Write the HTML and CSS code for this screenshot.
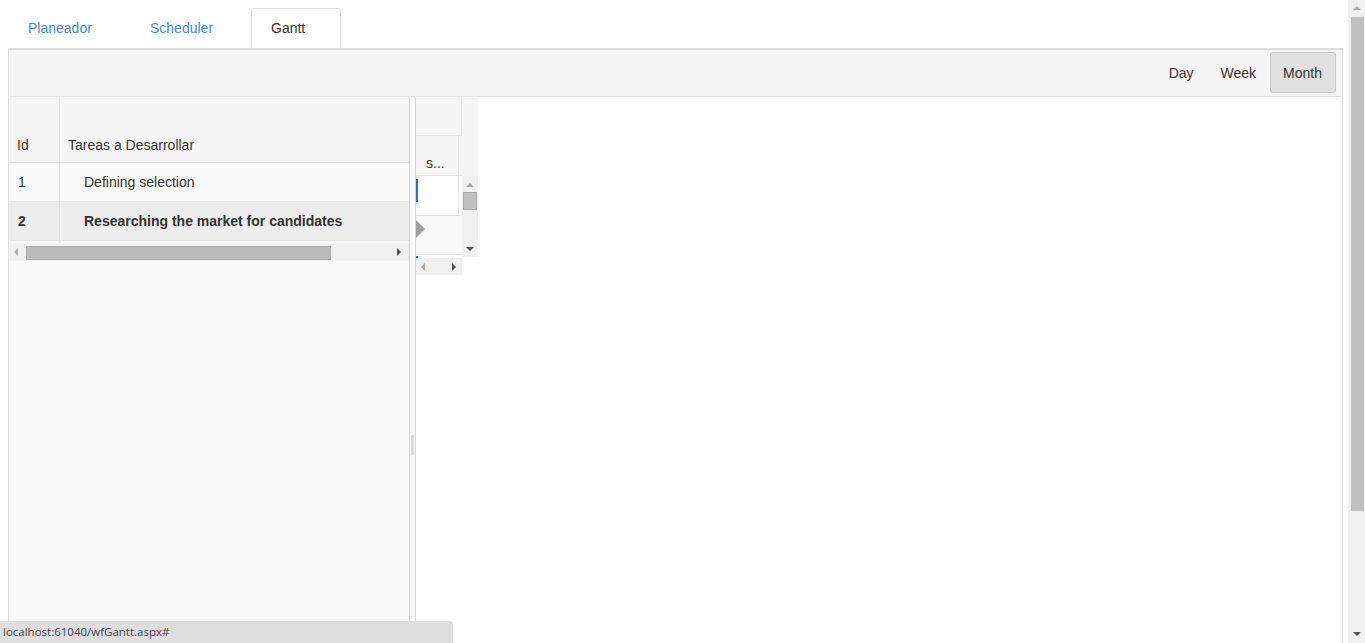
FILE: index.html
```html
<!DOCTYPE html>
<html lang="es">
<head>
<meta charset="utf-8">
<title>wfGantt</title>
<link rel="stylesheet" href="styles.css">
</head>
<body>
<ul class="tabs">
  <li class="tab tab-1"><a href="#">Planeador</a></li>
  <li class="tab tab-2"><a href="#">Scheduler</a></li>
  <li class="tab tab-3 active"><a href="#">Gantt</a></li>
</ul>
<div class="gantt">
  <div class="toolbar">
    <div class="views">
      <button class="view">Day</button>
      <button class="view">Week</button>
      <button class="view selected">Month</button>
    </div>
  </div>
  <div class="panes">
    <div class="list">
      <div class="list-head">
        <div class="hcell c-id">Id</div>
        <div class="hcell c-title">Tareas a Desarrollar</div>
      </div>
      <div class="row">
        <div class="cell c-id">1</div>
        <div class="cell c-title"><span class="indent">Defining selection</span></div>
      </div>
      <div class="row row-sel">
        <div class="cell c-id">2</div>
        <div class="cell c-title"><span class="indent">Researching the market for candidates</span></div>
      </div>
      <div class="row row-fill">
        <div class="cell c-id"></div>
        <div class="cell c-title"></div>
      </div>
      <div class="hscroll">
        <span class="arr arr-left dim"></span>
        <span class="hthumb"></span>
        <span class="arr arr-right"></span>
      </div>
    </div>
    <div class="splitter"><span class="handle"></span></div>
    <div class="timeline">
      <div class="mini">
        <div class="mini-main">
          <div class="th-top"></div>
          <div class="th-bottom"><div class="th-cell">s...</div></div>
          <div class="trow trow-1"><span class="bar"></span><span class="tcell"></span></div>
          <div class="trow trow-2"><span class="tri"></span></div>
          <div class="trow-gap"><span class="tick"></span></div>
          <div class="mini-hscroll">
            <span class="arr arr-left dim"></span>
            <span class="arr arr-right"></span>
          </div>
        </div>
        <div class="mini-side">
          <div class="side-head"></div>
          <div class="vscroll">
            <span class="arr arr-up dim"></span>
            <span class="vthumb"></span>
            <span class="arr arr-down"></span>
          </div>
        </div>
      </div>
    </div>
  </div>
</div>
<div class="statusbar">localhost:61040/wfGantt.aspx#</div>
<div class="page-scroll">
  <span class="arr arr-up dim"></span>
  <span class="page-thumb"></span>
  <span class="arr arr-down dark"></span>
</div>
</body>
</html>
```
FILE: styles.css
```css
html, body {
  overflow: hidden;
  height: 100%;
}
body {
  margin: 8px 0 0 8px;
  font-family: "Liberation Sans", Arial, sans-serif;
  font-size: 14px;
  line-height: 20px;
  color: #333;
  background: #fff;
}

/* Tabs */
.tabs {
  list-style: none;
  margin: 0;
  padding: 0;
  display: flex;
  gap: 2px;
  height: 40px;
}
.tab {
  box-sizing: border-box;
  height: 40px;
  border: 1px solid transparent;
  border-bottom: 0;
  border-radius: 4px 4px 0 0;
}
.tab a {
  display: block;
  padding: 9px 0 10px 19px;
  color: #428bca;
  text-decoration: none;
}
.tab-1 { width: 120px; }
.tab-2 { width: 119px; }
.tab-3 { width: 90px; }
.tab.active {
  border-color: #ddd;
  background: #fff;
}
.tab.active a { color: #333; }

/* Gantt container */
.gantt {
  box-sizing: border-box;
  width: 1335px;
  border: 1px solid #ddd;
  border-top: 2px solid #ddd;
}
.toolbar {
  box-sizing: border-box;
  height: 47px;
  background: #f5f5f5;
  border-bottom: 1px solid #e3e3e3;
  display: flex;
  justify-content: flex-end;
  padding: 2px 6px 0 0;
}
.views {
  display: flex;
  height: 41px;
}
.view {
  font: inherit;
  color: #333;
  background: transparent;
  border: 1px solid transparent;
  border-radius: 3px;
  padding: 0 13px 0 12px;
  height: 41px;
  cursor: pointer;
}
.view.selected {
  background: #e0e0e0;
  border-color: #c8c8c8;
}

.panes {
  display: flex;
  height: 560px;
}

/* Tree list */
.list {
  width: 400px;
  background: #fafafa;
  border-right: 1px solid #d5d5d5;
}
.list-head {
  display: flex;
  height: 65px;
  background: #f5f5f5;
  border-bottom: 1px solid #ddd;
}
.hcell {
  display: flex;
  align-items: flex-end;
  padding: 0 8px 7px 8px;
}
.c-id {
  box-sizing: border-box;
  width: 51px;
  border-right: 1px solid #e3e3e3;
}
.c-title {
  flex: 1;
}
.row {
  display: flex;
  height: 38px;
  border-bottom: 1px solid #e3e3e3;
}
.cell {
  display: flex;
  align-items: center;
  padding: 0 8px 1px 8px;
}
.cell.c-id { padding-left: 9px; }
.indent { padding-left: 16px; }
.row-sel {
  background: #ededed;
  font-weight: bold;
}
.row-fill {
  height: 2px;
  border-bottom: 0;
}
.hscroll {
  position: relative;
  height: 18px;
  background: #f1f1f1;
}
.hthumb {
  position: absolute;
  left: 17px;
  top: 3px;
  width: 303px;
  height: 12px;
  background: #bcbcbc;
  border: 1px solid #ababab;
}

/* Arrows (CSS triangles) */
.arr {
  position: absolute;
  width: 0;
  height: 0;
  border: 4px solid transparent;
}
.arr-left {
  border-right-color: #505050;
  border-left-width: 0;
}
.arr-right {
  border-left-color: #505050;
  border-right-width: 0;
}
.arr-up {
  border-bottom-color: #505050;
  border-top-width: 0;
}
.arr-down {
  border-top-color: #505050;
  border-bottom-width: 0;
}
.arr-left.dim { border-right-color: #a8a8a8; }
.arr-up.dim { border-bottom-color: #a8a8a8; }
.hscroll .arr-left { left: 5px; top: 5px; }
.hscroll .arr-right { right: 8px; top: 5px; }

/* Splitter */
.splitter {
  width: 5px;
  background: #fafafa;
  border-right: 1px solid #d5d5d5;
  display: flex;
  align-items: center;
}
.handle {
  display: block;
  width: 3px;
  height: 20px;
  margin-left: 1px;
  margin-top: 136px;
  background: #dcdcdc;
}

/* Timeline */
.timeline {
  flex: 1;
  background: #fff;
}
.mini {
  display: flex;
  width: 62px;
}
.mini-main {
  width: 46px;
}
.th-top {
  height: 38px;
  background: #f5f5f5;
  border-bottom: 1px solid #e3e3e3;
  border-right: 1px solid #e3e3e3;
}
.th-bottom {
  height: 39px;
  background: #f5f5f5;
  border-bottom: 1px solid #e3e3e3;
}
.th-cell {
  box-sizing: border-box;
  width: 43px;
  height: 39px;
  border-right: 1px solid #e3e3e3;
  padding: 18px 0 0 10px;
  font-size: 14px;
  line-height: 18px;
}
.trow {
  position: relative;
  height: 39px;
  border-bottom: 1px solid #e3e3e3;
}
.trow-2 {
  height: 38px;
  background: #fafafa;
}
.tcell {
  position: absolute;
  left: 42px;
  top: 0;
  bottom: 0;
  border-left: 1px solid #e3e3e3;
}
.bar {
  position: absolute;
  left: 0;
  top: 3px;
  width: 2px;
  height: 23px;
  background: #2f73b5;
}
.tri {
  position: absolute;
  left: 0;
  top: 4px;
  width: 0;
  height: 0;
  border-top: 9px solid transparent;
  border-bottom: 9px solid transparent;
  border-left: 9px solid #a0a0a0;
}
.trow-gap {
  position: relative;
  height: 3px;
}
.tick {
  position: absolute;
  left: 0;
  top: 1px;
  width: 2px;
  height: 2px;
  background: #2f73b5;
}
.mini-hscroll {
  position: relative;
  height: 17px;
  background: #f0f0f0;
}
.mini-hscroll .arr-left { left: 5px; top: 5px; }
.mini-hscroll .arr-right { right: 6px; top: 5px; }
.mini-side {
  width: 16px;
}
.side-head {
  height: 79px;
  background: #f5f5f5;
}
.vscroll {
  position: relative;
  height: 81px;
  background: #f0f0f0;
}
.vscroll .arr-up { left: 4px; top: 7px; }
.vscroll .arr-down { left: 4px; bottom: 6px; }
.vthumb {
  position: absolute;
  left: 1px;
  top: 16px;
  width: 12px;
  height: 16px;
  background: #c1c1c1;
  border: 1px solid #a9a9a9;
}

/* Status bar */
.statusbar {
  position: fixed;
  left: 0;
  bottom: 0;
  width: 450px;
  height: 22px;
  padding-left: 3px;
  background: #dedede;
  border-top-right-radius: 4px;
  font-family: "Open Sans", "Noto Sans", sans-serif;
  font-size: 11.5px;
  line-height: 22px;
  color: #444;
}

/* Page scrollbar */
.page-scroll {
  position: fixed;
  top: 0;
  right: 0;
  width: 17px;
  height: 643px;
  background: #f0f0f0;
}
.page-thumb {
  position: absolute;
  left: 3px;
  top: 17px;
  width: 13px;
  height: 494px;
  background: #c1c1c1;
}
.page-scroll .arr-up { left: 5px; top: 6px; }
.page-scroll .arr-down { left: 5px; bottom: 7px; }
```
